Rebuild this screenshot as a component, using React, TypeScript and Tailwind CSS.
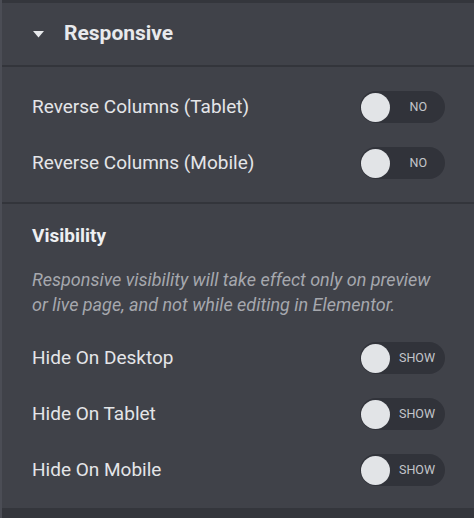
import React from "react";

function Toggle({ label }: { label: string }) {
  return (
    <div className="relative w-[85px] h-[32px] rounded-full bg-[#31333a] flex items-center">
      <div className="absolute left-[1px] top-[1.5px] w-[29px] h-[29px] rounded-full bg-[#e2e4e7]" />
      <span className={`ml-auto text-[12.5px] text-[#c3c5ca] ${label === "NO" ? "mr-[18px]" : "mr-[10px]"}`}>
        {label}
      </span>
    </div>
  );
}

function Row({ text, label }: { text: string; label: string }) {
  return (
    <div className="flex items-center justify-between h-[32px] pl-[30px] pr-[29px]">
      <span className="text-[19px] text-[#e4e5e8]">{text}</span>
      <Toggle label={label} />
    </div>
  );
}

export default function App() {
  return (
    <div
      className="w-[474px] h-[518px] bg-[#404249] border-l-2 border-[#4b4d55] flex flex-col overflow-hidden"
      style={{ fontFamily: "Roboto, 'Liberation Sans', sans-serif" }}
    >
      <div className="h-[3px] bg-[#34363c] shrink-0" />
      <div className="h-[64px] flex items-center pl-[31px] border-b-2 border-[#33353b] shrink-0">
        <svg width="11" height="7" viewBox="0 0 11 7" className="mt-[1px]">
          <path d="M0 0 L11 0 L5.5 6.5 Z" fill="#e8e9ec" />
        </svg>
        <span className="ml-[20px] text-[21px] font-bold text-[#e8e9ec]">Responsive</span>
      </div>
      <div className="flex flex-col gap-[24px] pt-[24px] pb-[23px] border-b-2 border-[#33353b] shrink-0">
        <Row text="Reverse Columns (Tablet)" label="NO" />
        <Row text="Reverse Columns (Mobile)" label="NO" />
      </div>
      <div className="pl-[30px] pt-[18px] shrink-0">
        <div className="text-[19px] leading-[28px] font-bold text-[#eeeff1]">Visibility</div>
        <div className="mt-[17px] italic text-[18px] leading-[25px] text-[#a6a8ae]">
          Responsive visibility will take effect only on preview
          <br />
          or live page, and not while editing in Elementor.
        </div>
      </div>
      <div className="flex flex-col gap-[24px] pt-[25px] shrink-0">
        <Row text="Hide On Desktop" label="SHOW" />
        <Row text="Hide On Tablet" label="SHOW" />
        <Row text="Hide On Mobile" label="SHOW" />
      </div>
      <div className="flex-1" />
      <div className="h-[10px] bg-[#34363c] shrink-0" />
    </div>
  );
}
